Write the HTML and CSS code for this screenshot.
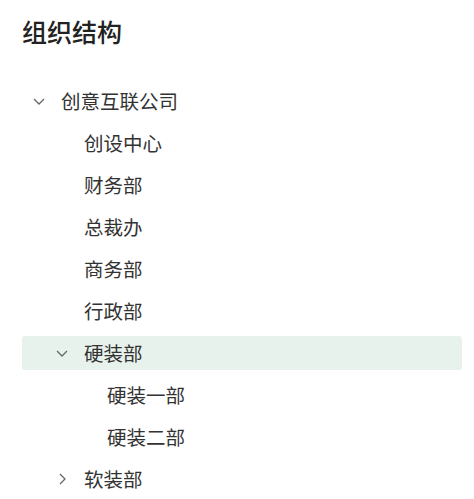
FILE: index.html
```html
<!DOCTYPE html>
<html lang="zh-CN">
<head>
    <meta charset="UTF-8">
    <meta name="viewport" content="width=device-width, initial-scale=1.0">
    <title>组织结构</title>
    <link rel="stylesheet" href="styles.css">
</head>
<body>
    <div class="panel">
        <h2 class="panel-title">组织结构</h2>

        <ul class="tree">
            <li class="tree-row depth-0">
                <span class="toggle"><svg viewBox="0 0 12 12"><polyline points="1,4 6,9 11,4"/></svg></span>
                <span class="label">创意互联公司</span>
            </li>
            <li class="tree-row depth-1"><span class="toggle"></span><span class="label">创设中心</span></li>
            <li class="tree-row depth-1"><span class="toggle"></span><span class="label">财务部</span></li>
            <li class="tree-row depth-1"><span class="toggle"></span><span class="label">总裁办</span></li>
            <li class="tree-row depth-1"><span class="toggle"></span><span class="label">商务部</span></li>
            <li class="tree-row depth-1"><span class="toggle"></span><span class="label">行政部</span></li>
            <li class="tree-row depth-1 is-active">
                <span class="toggle"><svg viewBox="0 0 12 12"><polyline points="1,4 6,9 11,4"/></svg></span>
                <span class="label">硬装部</span>
            </li>
            <li class="tree-row depth-2"><span class="toggle"></span><span class="label">硬装一部</span></li>
            <li class="tree-row depth-2"><span class="toggle"></span><span class="label">硬装二部</span></li>
            <li class="tree-row depth-1">
                <span class="toggle"><svg viewBox="0 0 12 12"><polyline points="4,1 9,6 4,11"/></svg></span>
                <span class="label">软装部</span>
            </li>
        </ul>
    </div>
</body>
</html>
```

FILE: styles.css
```css
body {
    margin: 0;
    background: #fff;
    color: #333;
    font-family: "Noto Sans CJK SC", "Noto Sans", sans-serif;
}

.panel {
    padding: 11px 12px 0 22px;
}

.panel-title {
    margin: 0;
    font-size: 25px;
    line-height: 40px;
    font-weight: 500;
    color: #222;
}

.tree {
    list-style: none;
    margin: 33px 0 0;
    padding: 0;
    display: flex;
    flex-direction: column;
    gap: 8px;
}

.tree-row {
    display: flex;
    align-items: center;
    height: 34px;
    border-radius: 3px;
    font-size: 19.5px;
}

.depth-0 { padding-left: 9px; }
.depth-1 { padding-left: 32px; }
.depth-2 { padding-left: 55px; }

.is-active {
    background: #e7f2ec;
}

.toggle {
    width: 16px;
    height: 16px;
    margin-right: 14px;
    display: flex;
    align-items: center;
    justify-content: center;
}

.toggle svg {
    width: 12px;
    height: 12px;
    fill: none;
    stroke: #666;
    stroke-width: 1.3;
}

.label {
    line-height: 1;
}
```
